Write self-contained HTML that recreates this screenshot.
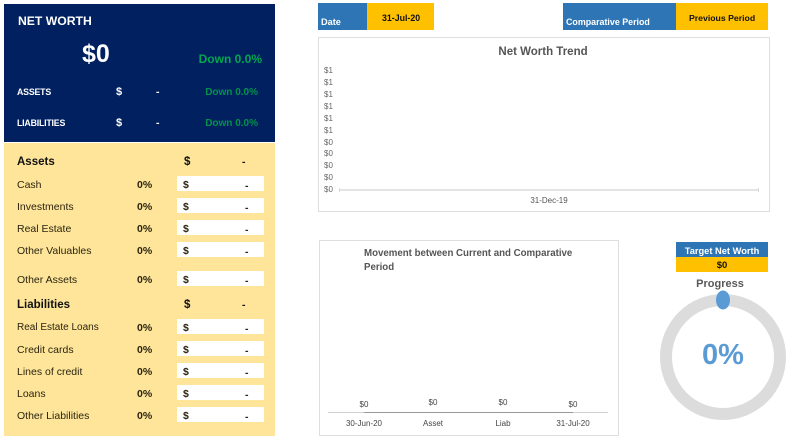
<!DOCTYPE html>
<html><head><meta charset="utf-8"><style>
html,body{margin:0;padding:0;background:#fff}
#p{position:relative;width:794px;height:442px;overflow:hidden;background:#fff;font-family:"Liberation Sans",sans-serif}
#p div{position:absolute}
.t{white-space:nowrap;height:16px;line-height:16px;margin-top:-7px;font-size:10.5px;color:#2b2410}
.b{font-weight:bold}
.w{color:#fff}
.g{color:#00a650;font-weight:bold;text-align:right}
.c{background:#fff;left:177px;width:87px;height:15px}
.ax{color:#666;font-size:8px}
.ct{transform:translateX(-50%)}
</style></head><body><div id="p">
<div style="left:4px;top:4px;width:271px;height:138px;background:#002060"></div>
<div style="left:4px;top:143px;width:271px;height:293px;background:#fee599"></div>

<div class="t b w" style="left:18px;top:20px;font-size:12.2px">NET WORTH</div>
<div class="t b w" style="left:82px;top:54px;font-size:25px;height:30px;line-height:30px;margin-top:-15px">$0</div>
<div class="t g" style="right:532px;top:58px;font-size:12px">Down 0.0%</div>
<div class="t b w" style="left:17px;top:91px;font-size:8.8px;letter-spacing:-.2px">ASSETS</div>
<div class="t b w" style="left:116px;top:91px;font-size:11px">$</div>
<div class="t b w" style="left:156px;top:91px">-</div>
<div class="t g" style="right:536px;top:92px;font-size:10px;color:#00924a">Down 0.0%</div>
<div class="t b w" style="left:17px;top:122px;font-size:8.8px;letter-spacing:-.2px">LIABILITIES</div>
<div class="t b w" style="left:116px;top:122px;font-size:11px">$</div>
<div class="t b w" style="left:156px;top:122px">-</div>
<div class="t g" style="right:536px;top:123px;font-size:10px;color:#00924a">Down 0.0%</div>

<div class="t b" style="left:17px;top:161px;font-size:11.5px;color:#111">Assets</div>
<div class="t b" style="left:184px;top:161px;font-size:11.5px;color:#111">$</div>
<div class="t b" style="left:242px;top:161px;color:#111">-</div>
<div class="t b" style="left:17px;top:304px;font-size:11.5px;color:#111">Liabilities</div>
<div class="t b" style="left:184px;top:304px;font-size:11.5px;color:#111">$</div>
<div class="t b" style="left:242px;top:304px;color:#111">-</div>

<div class="c" style="top:176px"></div><div class="t" style="left:17px;top:184px">Cash</div><div class="t b" style="left:137px;top:184px">0%</div><div class="t b" style="left:183px;top:184px">$</div><div class="t b" style="left:245px;top:185px">-</div>
<div class="c" style="top:198px"></div><div class="t" style="left:17px;top:206px">Investments</div><div class="t b" style="left:137px;top:206px">0%</div><div class="t b" style="left:183px;top:206px">$</div><div class="t b" style="left:245px;top:207px">-</div>
<div class="c" style="top:220px"></div><div class="t" style="left:17px;top:228px">Real Estate</div><div class="t b" style="left:137px;top:228px">0%</div><div class="t b" style="left:183px;top:228px">$</div><div class="t b" style="left:245px;top:229px">-</div>
<div class="c" style="top:242px"></div><div class="t" style="left:17px;top:250px">Other Valuables</div><div class="t b" style="left:137px;top:250px">0%</div><div class="t b" style="left:183px;top:250px">$</div><div class="t b" style="left:245px;top:251px">-</div>
<div class="c" style="top:271px"></div><div class="t" style="left:17px;top:279px">Other Assets</div><div class="t b" style="left:137px;top:279px">0%</div><div class="t b" style="left:183px;top:279px">$</div><div class="t b" style="left:245px;top:280px">-</div>

<div class="c" style="top:319px"></div><div class="t" style="left:17px;top:327px;font-size:10px">Real Estate Loans</div><div class="t b" style="left:137px;top:327px">0%</div><div class="t b" style="left:183px;top:327px">$</div><div class="t b" style="left:245px;top:328px">-</div>
<div class="c" style="top:341px"></div><div class="t" style="left:17px;top:349px">Credit cards</div><div class="t b" style="left:137px;top:349px">0%</div><div class="t b" style="left:183px;top:349px">$</div><div class="t b" style="left:245px;top:350px">-</div>
<div class="c" style="top:363px"></div><div class="t" style="left:17px;top:371px">Lines of credit</div><div class="t b" style="left:137px;top:371px">0%</div><div class="t b" style="left:183px;top:371px">$</div><div class="t b" style="left:245px;top:372px">-</div>
<div class="c" style="top:385px"></div><div class="t" style="left:17px;top:393px">Loans</div><div class="t b" style="left:137px;top:393px">0%</div><div class="t b" style="left:183px;top:393px">$</div><div class="t b" style="left:245px;top:394px">-</div>
<div class="c" style="top:407px"></div><div class="t" style="left:17px;top:415px">Other Liabilities</div><div class="t b" style="left:137px;top:415px">0%</div><div class="t b" style="left:183px;top:415px">$</div><div class="t b" style="left:245px;top:416px">-</div>

<div style="left:318px;top:3px;width:49px;height:27px;background:#2e75b6"></div>
<div style="left:367px;top:3px;width:67px;height:27px;background:#ffc000"></div>
<div style="left:563px;top:3px;width:113px;height:27px;background:#2e75b6"></div>
<div style="left:676px;top:3px;width:92px;height:27px;background:#ffc000"></div>
<div class="t b w" style="left:321px;top:21px;font-size:9.2px">Date</div>
<div class="t b" style="left:382px;top:17px;font-size:8.8px;color:#111">31-Jul-20</div>
<div class="t b w" style="left:566px;top:21px;font-size:8.9px">Comparative Period</div>
<div class="t b" style="left:689px;top:17px;font-size:8.7px;color:#111">Previous Period</div>

<div style="left:318px;top:37px;width:450px;height:173px;border:1px solid #dedede;box-sizing:content-box"></div>
<div class="t b ct" style="left:543px;top:51px;font-size:11.5px;color:#555">Net Worth Trend</div>
<div class="t ax" style="left:324px;top:70px">$1</div>
<div class="t ax" style="left:324px;top:82px">$1</div>
<div class="t ax" style="left:324px;top:94px">$1</div>
<div class="t ax" style="left:324px;top:106px">$1</div>
<div class="t ax" style="left:324px;top:118px">$1</div>
<div class="t ax" style="left:324px;top:130px">$1</div>
<div class="t ax" style="left:324px;top:142px">$0</div>
<div class="t ax" style="left:324px;top:153px">$0</div>
<div class="t ax" style="left:324px;top:165px">$0</div>
<div class="t ax" style="left:324px;top:177px">$0</div>
<div class="t ax" style="left:324px;top:189px">$0</div>
<div style="left:339px;top:189px;width:420px;height:2px;background:#e4e4e4"></div>
<div style="left:339px;top:188px;width:1px;height:4px;background:#d9d9d9"></div>
<div style="left:758px;top:188px;width:1px;height:4px;background:#d9d9d9"></div>
<div class="t ax ct" style="left:549px;top:200px;color:#555">31-Dec-19</div>

<div style="left:319px;top:240px;width:298px;height:194px;border:1px solid #dedede"></div>
<div class="t b" style="left:364px;top:253px;font-size:9.7px;color:#555">Movement between Current and Comparative</div>
<div class="t b" style="left:364px;top:267px;font-size:9.7px;color:#555">Period</div>
<div class="t ct" style="left:364px;top:404px;font-size:8px;color:#444">$0</div>
<div class="t ct" style="left:433px;top:402px;font-size:8px;color:#444">$0</div>
<div class="t ct" style="left:503px;top:402px;font-size:8px;color:#444">$0</div>
<div class="t ct" style="left:573px;top:404px;font-size:8px;color:#444">$0</div>
<div style="left:328px;top:412px;width:280px;height:1px;background:#d0d0d0"></div>
<div style="left:364px;top:412px;width:209px;height:1px;background:#999"></div>
<div class="t ct" style="left:364px;top:423px;font-size:8px;color:#444">30-Jun-20</div>
<div class="t ct" style="left:433px;top:423px;font-size:8px;color:#444">Asset</div>
<div class="t ct" style="left:503px;top:423px;font-size:8px;color:#444">Liab</div>
<div class="t ct" style="left:573px;top:423px;font-size:8px;color:#444">31-Jul-20</div>

<div style="left:676px;top:242px;width:92px;height:15px;background:#2e75b6"></div>
<div style="left:676px;top:257px;width:92px;height:15px;background:#ffc000"></div>
<div class="t b w ct" style="left:722px;top:250px;font-size:9.3px">Target Net Worth</div>
<div class="t b ct" style="left:722px;top:265px;font-size:9.5px;color:#111">$0</div>
<div class="t b ct" style="left:720px;top:283px;font-size:11px;color:#595959">Progress</div>
<svg style="position:absolute;left:650px;top:285px" width="144" height="144" viewBox="0 0 144 144">
<circle cx="73" cy="72" r="57" fill="none" stroke="#dcdcdc" stroke-width="12"/>
<ellipse cx="73" cy="15" rx="7" ry="9.500" fill="#5b9bd5"/>
</svg>
<div class="t b ct" style="left:723px;top:355px;font-size:29px;height:36px;line-height:36px;margin-top:-18px;color:#5b9bd5">0%</div>
</div></body></html>
